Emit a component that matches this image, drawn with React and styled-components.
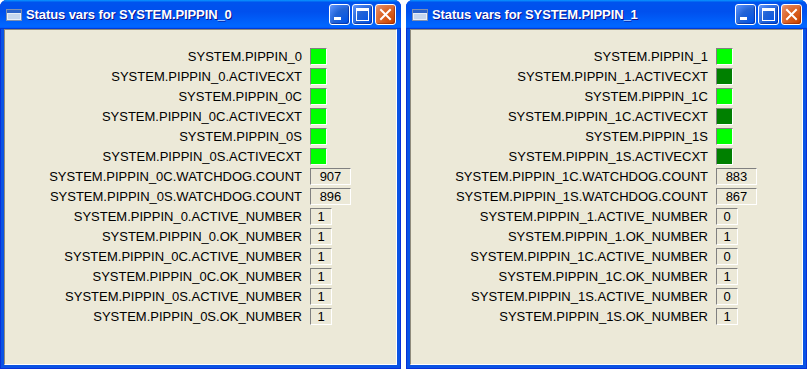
import React from 'react'
import styled, { createGlobalStyle, css } from 'styled-components'

const GlobalStyle = createGlobalStyle`
  body {
    margin: 0;
    background: #ffffff;
    font-family: "Liberation Sans", Arial, sans-serif;
  }
`

const Desktop = styled.div`
  display: flex;
  gap: 5px;
  width: 807px;
  height: 370px;
`

const Window = styled.div`
  width: 401px;
  height: 369px;
  display: flex;
  flex-direction: column;
  background: #0a53e4;
  border-radius: 7px 7px 0 0;
  box-shadow: inset 1px 0 #0831d9, inset -1px 0 #0831d9, inset 0 -1px #0831d9;
  overflow: hidden;
`

const TitleBar = styled.div`
  height: 29px;
  flex: none;
  display: flex;
  align-items: center;
  padding: 0 5px 0 6px;
  background: linear-gradient(
    180deg,
    #0997ff,
    #0053ee 8%,
    #0050ee 40%,
    #0066ff 88%,
    #0066ff 93%,
    #005bff 95%,
    #003dd7 96%,
    #003dd7
  );
`

const TitleText = styled.span`
  flex: 1;
  margin-left: 4px;
  color: #ffffff;
  font-size: 13px;
  font-weight: bold;
  letter-spacing: -0.1px;
  text-shadow: 1px 1px #0f1089;
  white-space: nowrap;
`

const Buttons = styled.div`
  display: flex;
  gap: 2px;
`

const CaptionButton = styled.div`
  position: relative;
  width: 21px;
  height: 21px;
  box-sizing: border-box;
  border: 1px solid #ffffff;
  border-radius: 3px;
  background: radial-gradient(circle at 90% 90%, #0054e9 0%, #2263d5 55%, #4480f0 80%, #6a9af5 100%);
  box-shadow: inset -1px -1px 1px rgba(0, 20, 120, 0.5);
  ${(p) =>
    p.$close &&
    css`
      background: radial-gradient(circle at 90% 90%, #cc4600 0%, #dc6527 55%, #e2835a 85%, #efa58a 100%);
      box-shadow: inset -1px -1px 1px rgba(120, 20, 0, 0.5);
    `}
`

const MinGlyph = styled.span`
  position: absolute;
  left: 4px;
  top: 12px;
  width: 7px;
  height: 3px;
  background: #ffffff;
`

const MaxGlyph = styled.span`
  position: absolute;
  left: 3px;
  top: 3px;
  width: 13px;
  height: 13px;
  box-sizing: border-box;
  border: 1px solid #ffffff;
  border-top-width: 3px;
`

const CloseGlyph = styled.svg`
  position: absolute;
  left: 3px;
  top: 3px;
`

const Client = styled.div`
  flex: 1;
  margin: 0 4px 4px;
  background: #ece9d8;
  border-top: 1px solid #8f8b7c;
  border-left: 1px solid #8f8b7c;
  border-right: 1px solid #ffffff;
  border-bottom: 1px solid #ffffff;
`

const VarGrid = styled.div`
  display: grid;
  grid-template-columns: 297px 1fr;
  grid-auto-rows: 20px;
  column-gap: 8px;
  align-items: center;
  padding-top: 16px;
`

const Label = styled.span`
  justify-self: end;
  font-size: 13px;
  color: #000000;
  white-space: nowrap;
`

const Sunken = css`
  box-sizing: border-box;
  height: 17px;
  border-top: 1px solid #808080;
  border-left: 1px solid #808080;
  border-right: 1px solid #ffffff;
  border-bottom: 1px solid #ffffff;
`

const Lamp = styled.div`
  ${Sunken};
  width: 17px;
  background: ${(p) => (p.$dim ? '#008000' : '#00ff00')};
`

const Value = styled.div`
  ${Sunken};
  width: ${(p) => (p.$wide ? '41px' : '22px')};
  display: flex;
  align-items: center;
  justify-content: center;
  font-size: 13px;
  color: #000000;
`

const AppIcon = () => (
  <svg width="16" height="12" viewBox="0 0 16 12">
    <rect x="0.5" y="0.5" width="15" height="11" fill="#e8eef8" stroke="#7d8fb0" />
    <rect x="1" y="1" width="14" height="3" fill="#2d63c8" />
    <rect x="2" y="5" width="12" height="5" fill="#c6d6ee" />
  </svg>
)

function StatusWindow({ name, rows }) {
  return (
    <Window>
      <TitleBar>
        <AppIcon />
        <TitleText>Status vars for {name}</TitleText>
        <Buttons>
          <CaptionButton>
            <MinGlyph />
          </CaptionButton>
          <CaptionButton>
            <MaxGlyph />
          </CaptionButton>
          <CaptionButton $close>
            <CloseGlyph width="13" height="13" viewBox="0 0 13 13">
              <path d="M2 2 L11 11 M11 2 L2 11" stroke="#ffffff" strokeWidth="2" strokeLinecap="square" />
            </CloseGlyph>
          </CaptionButton>
        </Buttons>
      </TitleBar>
      <Client>
        <VarGrid>
          {rows.map((r) => (
            <React.Fragment key={r.label}>
              <Label>{r.label}</Label>
              {r.lamp ? (
                <Lamp $dim={r.lamp === 'dim'} />
              ) : (
                <Value $wide={r.wide}>{r.value}</Value>
              )}
            </React.Fragment>
          ))}
        </VarGrid>
      </Client>
    </Window>
  )
}

const makeRows = (n, lamps, counts, numbers) => [
  { label: `SYSTEM.PIPPIN_${n}`, lamp: lamps[0] },
  { label: `SYSTEM.PIPPIN_${n}.ACTIVECXT`, lamp: lamps[1] },
  { label: `SYSTEM.PIPPIN_${n}C`, lamp: lamps[2] },
  { label: `SYSTEM.PIPPIN_${n}C.ACTIVECXT`, lamp: lamps[3] },
  { label: `SYSTEM.PIPPIN_${n}S`, lamp: lamps[4] },
  { label: `SYSTEM.PIPPIN_${n}S.ACTIVECXT`, lamp: lamps[5] },
  { label: `SYSTEM.PIPPIN_${n}C.WATCHDOG.COUNT`, value: counts[0], wide: true },
  { label: `SYSTEM.PIPPIN_${n}S.WATCHDOG.COUNT`, value: counts[1], wide: true },
  { label: `SYSTEM.PIPPIN_${n}.ACTIVE_NUMBER`, value: numbers[0] },
  { label: `SYSTEM.PIPPIN_${n}.OK_NUMBER`, value: numbers[1] },
  { label: `SYSTEM.PIPPIN_${n}C.ACTIVE_NUMBER`, value: numbers[2] },
  { label: `SYSTEM.PIPPIN_${n}C.OK_NUMBER`, value: numbers[3] },
  { label: `SYSTEM.PIPPIN_${n}S.ACTIVE_NUMBER`, value: numbers[4] },
  { label: `SYSTEM.PIPPIN_${n}S.OK_NUMBER`, value: numbers[5] },
]

const pippin0 = makeRows(
  '0',
  ['on', 'on', 'on', 'on', 'on', 'on'],
  [907, 896],
  [1, 1, 1, 1, 1, 1]
)

const pippin1 = makeRows(
  '1',
  ['on', 'dim', 'on', 'dim', 'on', 'dim'],
  [883, 867],
  [0, 1, 0, 1, 0, 1]
)

export default function App() {
  return (
    <>
      <GlobalStyle />
      <Desktop>
        <StatusWindow name="SYSTEM.PIPPIN_0" rows={pippin0} />
        <StatusWindow name="SYSTEM.PIPPIN_1" rows={pippin1} />
      </Desktop>
    </>
  )
}
